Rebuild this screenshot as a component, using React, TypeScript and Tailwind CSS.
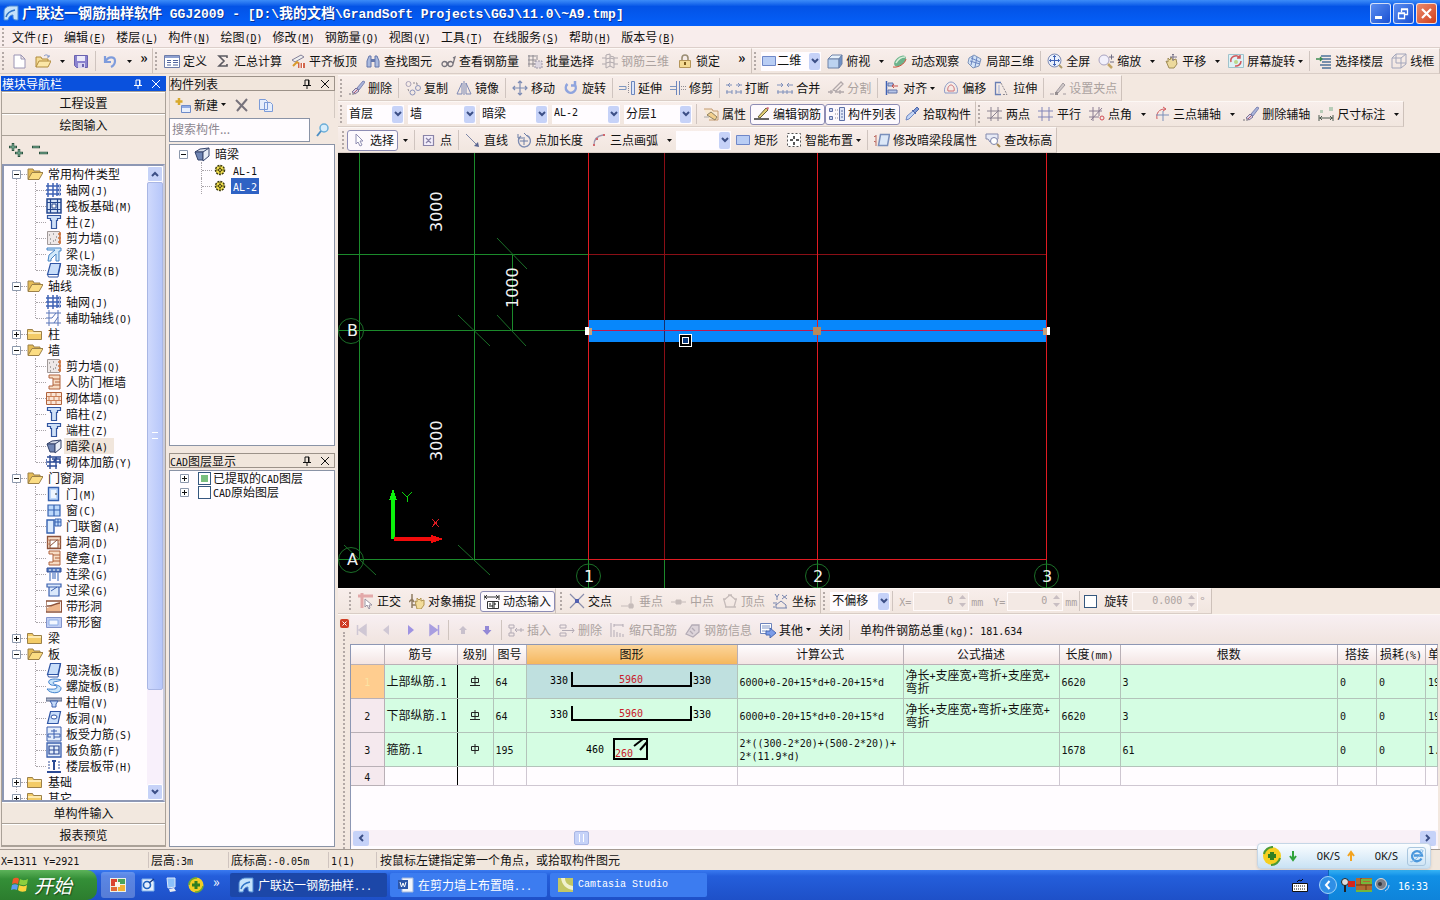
import type { ReactNode } from 'react';
import clsx from 'clsx';

const blue = '#3f62b5';
const sky = '#cfe0f8';
const brick = '#b0623c';
const grey = '#8f8b92';

const icons: Record<string, ReactNode> = {
  file: <path d="M3 2h7l4 4v9H3z M10 2v4h4" fill="#fff" stroke="#9a94b4" />,
  open: <><path d="M1 14V4h5l1 2h6v3" fill="#f5dc95" stroke="#b08a3c" /><path d="M1 14l3-6h12l-3 6z" fill="#fbe7a8" stroke="#b08a3c" /><path d="M9 3c2-2 4-1 5 1m0-2v2h-2" stroke="#7f93c4" fill="none" /></>,
  save: <><path d="M1.500 2.500h13v12h-11l-2-2z" fill="#8b83cf" stroke="#6a62ae" /><path d="M4 3h8v5H4z" fill="#eceafa" /><path d="M5 10h7v5H5z" fill="#d8d4f0" /><path d="M9 11h2v3H9z" fill="#6a62ae" /></>,
  undo: <path d="M3 3v6h6M3.500 8.500C6 3 13 3 13 8c0 3-2 5-4 6" fill="none" stroke="#7f9cdc" strokeWidth="2.200" />,
  define: <><path d="M.5 2.500h15v12H.5z" fill="#fff" stroke="#6d7ca8" /><path d="M1 3h14v2H1z" fill="#8ea0d0" /><path d="M3 7.500h4m2 0h5M3 9.500h4m2 0h5M3 12h4m2 0h5" stroke="#53669e" strokeWidth="1.200" /></>,
  sigma: <path d="M12 5V3H4l5 5-5 5h8v-2" fill="none" stroke="#5b5960" strokeWidth="1.600" />,
  align: <><path d="M2 7l9-5 3 2-9 5z" fill="#eee" stroke="#84809a" /><path d="M3 13l4-4 4 3" fill="none" stroke="#d99a2b" strokeWidth="2" /><path d="M8 10h7v5H8z" fill="#d2664b" /><path d="M10 10v5m2.500-5v5" stroke="#fff" /></>,
  find: <><path d="M2 14V8l2-5h2v11zm8 0V3h2l2 5v6z" fill="#a9b9de" stroke="#6577ab" /><path d="M6 6h4v3H6z" fill="#6577ab" /></>,
  glasses: <path d="M2 11a2.500 2.500 0 1 0 5 0 2.500 2.500 0 1 0-5 0m6 0a2.500 2.500 0 1 0 5 0 2.500 2.500 0 1 0-5 0M7 10h1m5 1l2-7-2 1" fill="none" stroke="#77747c" strokeWidth="1.300" />,
  batch: <><path d="M1 3h8M1 7h8M1 11h7M2 2v12M6 2v12M10 2v5" stroke={grey} /><path d="M8 8h7v7H8z" fill="#ddd6df" stroke="#9b95a5" strokeDasharray="2 1" /></>,
  mesh: <path d="M0 5h4m8 0h4M0 11h4m8 0h4M4 2v13l4-2V1zm4 1l4 1v11l-4-2M4 6l4-1 4 1M4 10l4-1 4 1" fill="none" stroke="#b0a9ad" />,
  lock: <><path d="M5 8V5a3 3 0 0 1 6 0v3" fill="none" stroke="#9b8e74" strokeWidth="1.600" /><path d="M2.500 7.500h11v7h-11z" fill="#f4da93" stroke="#b5965a" /><path d="M8 9v3" stroke="#7b5a1b" strokeWidth="2" /></>,
  box3d: <><path d="M1 6l4-4h10l-3 4z" fill="#e6f0fb" stroke="#6d82a8" /><path d="M1 6h11v9H1z" fill="#bcd3f0" stroke="#6d82a8" /><path d="M12 6l3-4v9l-3 4z" fill="#6f90c6" stroke="#6d82a8" /></>,
  orbit: <><ellipse cx="8" cy="8" rx="4" ry="7" fill="#6db38c" transform="rotate(50 8 8)" /><path d="M4 10C6 6 9 4 13 4" stroke="#d7efd9" strokeWidth="1.500" fill="none" /><path d="M1 14c5 1 12-3 13-8" stroke="#c8533b" fill="none" /></>,
  part3d: <><path d="M2 5l5-3 7 4-2 7-6 2-5-5z" fill="#d3e3f6" stroke="#7e93b8" /><path d="M6 3l-2 9m6-8l-2 10M3 8l10 3M4 5l9 4" stroke="#6b86c2" /></>,
  full: <><circle cx="7.500" cy="7.500" r="6.500" fill="#eaf0fb" stroke="#7f8cb4" /><path d="M7.500 2.500v10m-5-5h10M6 4l1.500-1.500L9 4m-3 7l1.500 1.500L9 11M4 6L2.500 7.500 4 9m7-3l1.500 1.500L11 9" fill="none" stroke={blue} /><path d="M12 12l3 3" stroke="#b09a67" strokeWidth="2" /></>,
  zoom: <><circle cx="6" cy="7" r="5" fill="#f2f0fb" stroke="#a9a3c0" /><path d="M10 11l4 4" stroke="#c3a566" strokeWidth="2.500" /><path d="M11 4h5m-2.500-2.500v5M12 9h4" stroke="#6f6c84" /></>,
  pan: <><path d="M3 8l2 1V5l2 2 1-3 2 3 3-1 1 5-3 4H6z" fill="#ecd99c" stroke="#9f8c56" /><path d="M10 1v7M7 4h7M9 2l1-1 1 1" stroke="#78748a" fill="none" /></>,
  screen: <><path d="M.5 1.500h15v13H.5z" fill="#dff2f6" stroke="#9fc3cc" /><path d="M3 9a5 5 0 0 1 9-4m0-3v3H9M13 8a5 5 0 0 1-6 5" fill="none" stroke="#d0575a" strokeWidth="1.500" /><circle cx="8" cy="9" r="2" fill="#bcd98c" /></>,
  floors: <><path d="M5 3h10M4 6h11M6 9h9M4 12h11M6 15h9" stroke="#4c7299" strokeWidth="1.300" fill="none" /><path d="M0 6h6M4 4l2 2-2 2" stroke="#3c8c52" strokeWidth="1.300" fill="none" /></>,
  wire: <path d="M1 5h9v10H1zM1 5l4-4h10l-5 4m5-4v10l-5 4M5 1v9h10" fill="none" stroke="#a3a6bb" />,
  brush: <><path d="M0 14h6" stroke="#77747c" strokeDasharray="2 1" /><path d="M8 8l6-7 2 1-6 8z" fill="#a9b4da" stroke="#7f84b2" /><path d="M3 12l4-4 3 3-4 3z" fill="#d9d1e8" stroke="#7d7295" /><path d="M5 13l3-3" stroke="#b05c6c" /></>,
  copy: <><circle cx="3.500" cy="4" r="2.500" fill="none" stroke="#a9a2b8" /><circle cx="13" cy="8" r="2.500" fill="none" stroke="#8b92ba" /><circle cx="7.500" cy="12.500" r="2.500" fill="none" stroke="#8b92ba" /><path d="M8 3h4m0 0v2M3 9l1 3" stroke={grey} strokeDasharray="2 1" /></>,
  mirror: <path d="M1 14h5V3zM15 14h-5V3zM8 1v14" fill="none" stroke="#7d89b5" />,
  move: <path d="M8 1v14M1 8h14M6 3l2-2 2 2m-4 10l2 2 2-2M3 6L1 8l2 2m10-4l2 2-2 2" fill="none" stroke="#7d8cb4" strokeWidth="1.200" />,
  rotate: <path d="M4.500 4A5 5 0 1 0 12 5M12 1v4.500H8" fill="none" stroke="#8fa4de" strokeWidth="2.500" />,
  extend: <><path d="M0 6.500h7v3H0" stroke="#7d96c0" fill="none" /><path d="M9.500 2v12" stroke={grey} strokeDasharray="1 1" /><path d="M12.500 1.500h3v13h-3z" fill="#dbe6fa" stroke="#6c86bd" /></>,
  trim: <><path d="M0 6.500h6M0 9.500h6" stroke="#7d96c0" /><path d="M6.500 1v14M9.500 1v14" stroke="#6c86bd" /><path d="M11 6.500h5M11 9.500h5" stroke={grey} strokeDasharray="1 1" /></>,
  breakk: <path d="M0 5h6M10 5h6M4 3L2 5l2 2m8-4l2 2-2 2M0 12h6M10 12h6M1 10v4M6 10v4m4-4v4m5-4v4" fill="none" stroke="#7f90bb" />,
  merge: <path d="M0 5h6M10 5h6M4 3l2 2-2 2m8-4l-2 2 2 2M0 12h16M1 10v4m5-4v4m4-4v4m5-4v4" fill="none" stroke="#7f90bb" />,
  split: <path d="M0 12h5m2 0h9M3 10v4m9-4v4M5 10l8-8 2 2-7 7z" fill="none" stroke="#b1a8aa" strokeWidth="1.300" />,
  alignL: <><path d="M2.500 1v14" stroke={blue} strokeWidth="1.500" /><path d="M4 3h5v3H4zM4 10h9v3H4z" fill="#b7c5e8" stroke="#6274a8" /><path d="M14 6H8m2-2L8 6l2 2" stroke="#c4504c" fill="none" /></>,
  offset: <><path d="M2 13c-2-5 2-11 6-11s8 6 6 11z" fill="none" stroke="#8e9cc8" /><path d="M5 11c-1-3 1-6 3-6s4 3 3 6z" fill="none" stroke="#cf6f76" /></>,
  stretch: <><path d="M7 2.500H1.500v12H7" fill="none" stroke="#6a7fb4" strokeWidth="1.300" /><path d="M7 3l6 11.500H8" stroke={grey} strokeDasharray="2 1" fill="none" /><path d="M5 5v8" stroke="#9fb0d8" /></>,
  grip: <><path d="M0 14h4m9 0h3" stroke="#a29ba0" /><path d="M6 12l7-9 2 2-7 8z" fill="#cfc7c8" stroke="#a29ba0" /><path d="M5 12h3v3H5z" fill="#958e90" /></>,
  prop: <><path d="M1 3h8l1 2h5v9H6" fill="#f9e9d1" stroke="#c39a71" /><path d="M4 9l4-3 6 5-2 3z" fill="#f2cf8c" stroke="#8d8061" /><path d="M1 11h5" stroke="#aaa" /></>,
  pencil: <><path d="M0 13h15" stroke="#333" strokeWidth="1.500" /><path d="M4 11l8-9 2 2-8 8z" fill="#e4cf75" stroke="#67603a" /><path d="M12 2l2 2 1-2-1-1z" fill="#d26a76" /></>,
  list: <><path d="M.5 2.500h3v3h-3zM.5 10.500h3v3h-3z" fill="#cbd5ee" stroke="#5d6fa5" /><path d="M6 4h3M6 8h3M6 12h3" stroke={grey} strokeDasharray="1 1" /><path d="M10.500 1.500h5v13h-5z" fill="#dfe6f7" stroke="#5d6fa5" /><path d="M12 5h2M12 8h2m-2 3h2" stroke="#5d6fa5" /></>,
  pick: <><path d="M2 14l1-4 6-5 2 2-6 6z" fill="#c4d5f5" stroke="#6f88c2" /><path d="M8 4l4 4M9 5l4-4 2 2-4 4z" stroke="#4f68ab" fill="#7f9ad6" /></>,
  ax2: <path d="M4 1v14M11 1v14M0 5h15M0 12h15M3 13l9-9" stroke="#8a8290" fill="none" />,
  axp: <path d="M4 1v14M11 1v14M0 5h15M0 11h15" stroke="#8185b8" fill="none" />,
  axa: <><path d="M4 1v14M0 5h13M0 11h10M2 14L13 2M10 1v9" stroke="#8a7c92" fill="none" /><circle cx="13" cy="12" r="2" fill="none" stroke="#d14c56" /></>,
  ax3: <><path d="M3 13c-1-6 2-10 8-10m-2-2l3 2-3 2" stroke="#d1575c" fill="none" /><path d="M9 5v10M2 9h13" stroke="#7b8fb9" /></>,
  dim: <><path d="M1 9v6M15 9v6M1 12h14M4 10l-2 2 2 2m8-4l2 2-2 2" stroke="#4d5a50" fill="none" /><path d="M2 4h3v3H2zM11 1h4v4h-4z" fill="#b7ccb8" /></>,
  cursor: <path d="M5 2v10l2-2 2 4 2-1-2-4h3z" fill="#fff" stroke="#8f8db2" />,
  point: <path d="M2.500 3.500h10v10h-10zM5 6l5 5m0-5l-5 5" fill="#f3eefb" stroke="#8a84a8" strokeWidth="1.200" />,
  line: <><path d="M1 2l11 11" stroke="#7d86a8" /><path d="M14 15l-1-5-4 4z" fill="#58648f" /></>,
  len: <><path d="M5 4a6 6 0 1 0 6-.5" fill="none" stroke="#7d8cb2" strokeWidth="1.400" /><path d="M8 5v8M4 9h8M2 2v4h5M8 1l3 3" stroke="#6b7ca5" fill="none" /></>,
  arc: <><path d="M3 13C3 7 6 4 12 3" fill="none" stroke="#9d94ab" strokeWidth="1.300" /><path d="M2 12h2v2H2zM5 6h2v2H5zM12 2h2v2h-2z" fill="#d1676d" /></>,
  rect: <path d="M1.500 3.500h13v9h-13z" fill="#b9cdf4" stroke="#6f87c8" />,
  smart: <><path d="M1.500 1.500h13v13h-13z" fill="#fff" stroke="#555" strokeDasharray="2 2" /><path d="M8 4v3m0 3v3M4 8h3m3 0h3" stroke="#222" strokeWidth="1.500" /></>,
  modify: <><path d="M6.500 2.500h9l-2 11h-9z" fill="#dce7f7" stroke="#7a8fbb" strokeWidth="1.500" /><path d="M2 4a3 3 0 0 0 0 6m0 4V3" stroke="#bb6a62" fill="none" /></>,
  level: <><path d="M1 2h12v5l-3 3H5L3 7H1z" fill="#e7eaf6" stroke="#8389ad" /><circle cx="9" cy="9" r="3.500" fill="#fff" stroke="#7c83a9" /><path d="M12 12l3 3" stroke="#a58a55" strokeWidth="2" /></>,
  ortho: <><path d="M0 3h15M4 0v15" stroke="#e3a9a9" strokeWidth="3" /><path d="M7 6v8l2-2 2 4 1-1-1-3h3z" fill="#fff" stroke="#9a93a2" /></>,
  snap: <><path d="M3 1v14M0 9l3-3 2 3M3 12h4" stroke="#8f7c62" fill="none" strokeWidth="1.500" /><path d="M6 8l2 1V5l2 2 2-2v3l3-1v5l-3 4H8z" fill="#f3dc9b" stroke="#b19451" /></>,
  dyn: <><path d="M0 2v5M15 2v5M0 4h15M3 2L1 4l2 2m9-4l2 2-2 2" stroke="#333" fill="none" /><path d="M3.500 8.500h11v7h-11z" fill="#fff" stroke="#333" /><path d="M6 10v4m2-4h3v2H8v2h3" stroke="#111" fill="none" /></>,
  cross: <><path d="M1 1l14 14M15 1L1 15" stroke="#8a8dac" strokeWidth="1.200" /><path d="M6 6h4v4H6z" fill="#5260b0" /></>,
  perp: <path d="M1 13h13M11 3v10M9 11h4v4H9z" stroke="#c6bcba" fill="#c6bcba" />,
  mid: <path d="M0 9h15M5 7h5v4H5z" stroke="#c6bcba" fill="#c6bcba" />,
  vertex: <path d="M8 2l6 5-2 7H4L2 7zM6 2h4M1 6h3M12 6h3M3 14h3m5 0h3" stroke="#c6bcba" fill="none" strokeWidth="1.300" />,
  coord: <path d="M2 1l2 3 2-3M4 4v3M9 2l5 4M14 2L9 6M3 9v6h11M3 12l5-4 5 4v3M0 10h2m-2 4h2" stroke="#7583ad" fill="none" />,
  first: <path d="M3.500 3v10M12 3v10L5 8z" fill="#cfc7d4" stroke="#cfc7d4" strokeWidth="1.500" />,
  prev: <path d="M11 3v10L5 8z" fill="#cfc7d4" />,
  next: <path d="M6 3v10l6-5z" fill="#9f93e2" />,
  last: <path d="M4 3v10l7-5zM12.500 3v10" fill="#a99ee0" stroke="#a99ee0" strokeWidth="1.500" />,
  up: <path d="M8 4l4 4h-2v4H6V8H4z" fill="#c8c0cc" />,
  down: <path d="M8 13l-4.500-5H6V4h4v4h2.500z" fill="#9388d6" />,
  insert: <path d="M1 3h5v3H1zM1 11h5v3H1zM3 6v5M8 8h8m-3-2v4M9 6L7 8l2 2" fill="none" stroke="#b3abb5" />,
  remove: <path d="M1 3h6v3H1zM1 11h6v3H1zM3 8.500h12M13 6l2 2.500L13 11" fill="none" stroke="#b3abb5" />,
  scale: <path d="M1 1v14M4 3h9M4 2v3m9-3v3M4 8v7m3-5v5m3-4v4m3-3v3" fill="none" stroke="#b3abb5" />,
  info: <path d="M1 12l6-9h7v7l-6 5zM7 6l3 3M5 9l3 3" fill="#ddd4da" stroke="#b3abb5" strokeWidth="1.300" />,
  other: <><path d="M.5 1.500h11v10H.5z" fill="#fff" stroke="#6d83bb" /><path d="M2 4h8M2 6h8M2 9h5" stroke="#7f94c6" /><path d="M6 9h4V6l6 5-6 5v-3H6z" fill="#7b9ce8" stroke="#4969b2" /></>,
  newItem: <><path d="M4 1v7M.5 4.500h7" stroke="#d8a92d" strokeWidth="2.500" /><path d="M6.500 8.500h9v7h-9z" fill="#e8effc" stroke="#6d8bc9" /><path d="M7 9h8v2H7z" fill="#8ea9e4" /></>,
  del: <path d="M2 3l11 11M13 2L3 14" stroke="#77737c" strokeWidth="2" />,
  pages: <path d="M1.500 2.500h6l2 2v8h-8zM6.500 5.500h6l2 2v7h-8z" fill="#e6eefc" stroke="#7b9bd8" />,
  folderOpen: <><path d="M1 13V3h5l1 2h6v3" fill="#e6bc57" stroke="#9c8048" /><path d="M1 13.500l4-7h11l-4 7z" fill="#fbdc83" stroke="#9c8048" /></>,
  folder: <><path d="M.5 3.500h5l1 2h8v8H.5z" fill="#f3cb67" stroke="#9c8048" /><path d="M1 7h13" stroke="#fdeab2" strokeWidth="2" /></>,
  grid: <><path d="M2 1v14M7 1v14M0 4h13M0 8h13M0 12h13M11 1v13" stroke={blue} strokeWidth="1.500" /><path d="M12.500 3h2v2h-2zM12.500 7h2v2h-2zM12.500 11h2v2h-2z" fill="#fff" stroke={blue} /></>,
  raft: <><path d="M1 1h14v14H1z" fill="#d6e4f8" stroke="#24468e" strokeWidth="1.500" /><path d="M4.500 1v14M11.500 1v14M1 4.500h14M1 11.500h14" stroke="#24468e" strokeWidth="1.200" /><path d="M6 6h4v4H6z" fill="#fff" stroke="#24468e" /></>,
  column: <path d="M1.500 1.500h13v3h-3v2h-1v8h-5v-8h-1v-2h-3z" fill={sky} stroke="#31549f" strokeWidth="1.200" />,
  shear: <><path d="M1.500 1.500h12v13h-12z" fill="#eee8e8" stroke="#a09898" /><path d="M14 2v12M12 4h3m-3 4h3m-3 4h3" stroke="#cc7440" strokeWidth="1.500" /><path d="M3 5h1m3-1h1m2 3h1M4 9h1m2 2h1m-4 2h1m4-3h1" stroke="#666" /></>,
  beam: <path d="M1 2h14v3h-2v10h-3V8l-5 5v2H2l1-6 6-5H1z" fill="#d2e9fa" stroke="#4785c5" />,
  slab: <><path d="M4.500 1.500h10l-2.500 11H1.500z" fill="#c9defa" stroke="#2f55a5" strokeWidth="1.200" /><path d="M1.500 12.500l1 2.500h9.500l2.500-13" fill="none" stroke="#2f55a5" /></>,
  aux: <path d="M3 0v16M12 0v16M0 3h15M0 13h15M0 8h6l4-5M8 13l4-6" fill="none" stroke="#5874b8" />,
  door1: <><path d="M3 1h11v14H3v-3h4V4H3z" fill="#f7dcc5" stroke={brick} /><path d="M7 5h7M9 8h5M7 11h7" stroke={brick} /></>,
  masonry: <><path d="M.5 2.500h15v12H.5z" fill="#fae5d7" stroke={brick} /><path d="M1 6.500h14M1 10.500h14M5 3v3.500m5-3.500v3.500M3 7v3m5-3v3m5-3v3M5 11v3m5-3v3" stroke="#cb8058" /></>,
  hidden: <><path d="M1 6l5-3 9-1-4 4z" fill="#d4dbe8" stroke="#36456c" /><path d="M1 6h8v8H4z" fill="#7086b4" stroke="#36456c" /><path d="M9 6l6-4v8l-6 5z" fill="#e9eef7" stroke="#36456c" /></>,
  rebar: <path d="M1 3h14M1 8h14M1 12h10M4 1v14M10 3v12M0 5v6M6 5h8v5M7 8l4-4" fill="none" stroke="#2d4b96" strokeWidth="1.400" />,
  door: <><path d="M2.500 1.500h10v13h-10z" fill="#bfd8fa" stroke="#3561b0" strokeWidth="1.400" /><path d="M5 4h5v8H5z" fill="#eff6ff" /><path d="M9 8h2" stroke="#333" /></>,
  win: <><path d="M2 3h12v11H2z" fill="#bcd8fb" stroke="#3561b0" strokeWidth="1.200" /><path d="M8 3v11M2 8h12" stroke="#3561b0" strokeWidth="1.200" /></>,
  doorWin: <><path d="M1 2h7v13H1z" fill="#dcebfd" stroke="#3561b0" strokeWidth="1.400" /><path d="M9 1h6v7H9zM12 1v7M9 4h6" fill="#bcd8fb" stroke="#3561b0" /></>,
  hole: <><path d="M1.500 2.500h13v12h-13z" fill="#f7dcc5" stroke="#8d523a" strokeWidth="1.300" /><path d="M1.500 6h3M11 6h3.500M1.500 10h3M11 10h3.500" stroke="#cb8058" /><path d="M4 6h8v8H4zM4 12l7-6" fill="#fff" stroke="#8d523a" /></>,
  link: <><path d="M1 2h14v4H1z" fill="#5b80c2" stroke="#2d4b96" /><path d="M3 4h2m2 0h2m2 0h2" stroke="#fff" /><path d="M4 6v9M12 6v9M7 6v7M9 6v7" stroke="#7796d0" strokeWidth="1.500" /></>,
  lintel: <><path d="M1 2h14v3H1zM3 5v9h10V5" fill="#dbe8fb" stroke="#3a5fae" strokeWidth="1.200" /><path d="M5 9l6-4" stroke="#3a5fae" /></>,
  stripHole: <><path d="M0 3h15.500v11H0z" fill="#fff" stroke="#8d523a" strokeWidth="1.300" /><path d="M1 10l13-6v9H1z" fill="#eeb68c" /><path d="M1 8c5 1 8-3 13-3" stroke="#8d523a" strokeWidth="1.500" fill="none" /></>,
  stripWin: <><path d="M.5 3.500h15v10H.5z" fill="#bfcdf3" stroke="#8293ca" /><path d="M3 6h9v5H3z" fill="#f3f7ff" stroke="#8fb0e8" /></>,
  spiral: <path d="M15 2C9 0 1 1 3 5s8 1 8 4-6 2-10 2c3 5 13 5 14 0 1-4-8-4-8-6s5-1 8-3z" fill="#c9e4fb" stroke="#3f80cc" />,
  cap: <><path d="M0 4h16v3H0z" fill="#aab3c8" stroke="#5b6786" /><path d="M4 7h8l-2 3v3H6v-3z" fill="#c6dbfa" stroke="#3a5fae" /></>,
  slabHole: <><path d="M4.500 1.500h10l-2.500 12H1.500z" fill="#c9defa" stroke="#2f55a5" strokeWidth="1.200" /><ellipse cx="8" cy="7" rx="3" ry="2" fill="#fff" stroke="#2f55a5" /></>,
  bar1: <><path d="M1 1h14v14H1z" fill="#e4edfb" stroke="#3a5fae" /><path d="M2 8h12v3H8M2 8v3h3M8 3v10M5 5h6" fill="none" stroke="#3a5fae" /></>,
  bar2: <><path d="M1 1h14v14H1z" fill="#e4edfb" stroke="#3a5fae" strokeWidth="1.300" /><path d="M3 8V4h10v4H3v4h10V8M8 4v8" fill="none" stroke="#2d4b96" strokeWidth="1.200" /></>,
  strip: <><path d="M1 14h14M8 3v9M6 3h4" stroke="#2d4b96" strokeWidth="2" /><path d="M3 3v9M13 3v9" stroke="#2d4b96" strokeDasharray="2 1" /></>,
  gear: <><circle cx="8" cy="8" r="4.500" fill="#f4e04d" stroke="#3d3b12" strokeDasharray="2 1" strokeWidth="1.500" /><path d="M8 4v8M4 8h8" stroke="#5d5a1a" /><circle cx="8" cy="8" r="1.500" fill="#f4e04d" stroke="#3d3b12" /></>,
  logo: <><path d="M1 15V7c0-4 3-6 7-6h7v14h-2c-2 0-3-1-3-3v-2c-2 0-4 1-5 5z" fill="#c4e2fb" stroke="#4d8ad2" /><path d="M3 12c1-4 4-6 9-7" stroke="#2f74c6" fill="none" strokeWidth="1.500" /></>,
  search: <><circle cx="9" cy="6" r="4" fill="#d8edfb" stroke="#6baed8" strokeWidth="1.500" /><path d="M6 9l-4 5" stroke="#4e8fc4" strokeWidth="2" /></>,
};

function Icon({ name, size = 'size-4' }: { name: string; size?: string }) {
  return (
    <svg viewBox="0 0 16 16" className={clsx('shrink-0', size)} fill="none" aria-hidden="true">
      {icons[name]}
    </svg>
  );
}

// Han characters take the CJK face, ASCII runs a half-width mono face
function T({ children, ul }: { children: string; ul?: boolean }) {
  return (
    <span className="whitespace-pre">
      {children.split(/([\x20-\x7e]+)/).map((part, i) =>
        i % 2 ? (
          <span key={i} className="font-['DejaVu_Sans_Mono',monospace] text-[10px] leading-none">
            {ul ? <>{part[0]}<u>{part.slice(1, -1)}</u>{part.slice(-1)}</> : part}
          </span>
        ) : (
          part
        )
      )}
    </span>
  );
}

function Caret() {
  return <svg viewBox="0 0 5 3" className="h-[3px] w-[5px] shrink-0" aria-hidden="true"><path d="M0 0h5L2.500 3z" fill="#111" /></svg>;
}

type ToolProps = { icon?: string; label?: string; off?: boolean; pressed?: boolean; menu?: boolean; split?: boolean; title?: string };

function Tool({ icon, label, off, pressed, menu, split, title }: ToolProps) {
  return (
    <>
      <button
        type="button"
        disabled={off}
        aria-label={label ? undefined : title}
        className={clsx(
          'flex h-[21px] shrink-0 items-center gap-[3px] rounded-[3px]',
          off && 'text-[#aba29f]',
          pressed ? 'border border-[#8d8cb4] bg-[#fdf9fd] px-[3px]' : 'px-1'
        )}
      >
        {icon && <Icon name={icon} />}
        {label && <T>{label}</T>}
        {menu && <Caret />}
      </button>
      {split && (
        <button type="button" aria-label={`${label ?? title} 选项`} className="flex h-[21px] w-[14px] shrink-0 items-center justify-center">
          <Caret />
        </button>
      )}
    </>
  );
}

function Sep() {
  return <span className="mx-[2px] h-5 w-px shrink-0 bg-[#cfc4bf]" />;
}

function Grip() {
  return <span className="ml-[2px] mr-[2px] h-[18px] w-[3px] shrink-0 border-l-2 border-dotted border-[#b3a9a6]" />;
}

function Bar({ children, className }: { children: ReactNode; className?: string }) {
  return (
    <div className={clsx('flex h-[26px] shrink-0 items-center border-b border-r border-t border-b-[#d9cdc6] border-r-[#cdc1ba] border-t-[#fdf8f5] bg-linear-to-b from-[#f8eeeb] to-[#f1e6df]', className)}>
      {children}
    </div>
  );
}

function Chevron({ className }: { className?: string }) {
  return <svg viewBox="0 0 8 6" className={clsx('h-[6px] w-2', className)} fill="none" aria-hidden="true"><path d="M1 1l3 3 3-3" stroke="#3c4f86" strokeWidth="2" /></svg>;
}

function Combo({ value, label, className, icon, mono }: { value: string; label: string; className: string; icon?: string; mono?: boolean }) {
  return (
    <div className={clsx('relative flex h-[19px] shrink-0 items-center bg-[#fffcff]', className)}>
      {icon && <Icon name={icon} />}
      <select
        aria-label={label}
        defaultValue={value}
        className={clsx('h-full w-full min-w-0 appearance-none bg-transparent pb-[3px] leading-4 outline-none', icon ? 'pl-0' : 'pl-[2px]', mono && "font-['DejaVu_Sans_Mono',monospace] text-[10px]")}
      >
        <option>{value}</option>
      </select>
      <span className="pointer-events-none absolute inset-y-px right-px flex w-[11px] items-center justify-center rounded-[2px] bg-[#c6d2f8]">
        <Chevron />
      </span>
    </div>
  );
}

const menus = ['文件(F)', '编辑(E)', '楼层(L)', '构件(N)', '绘图(D)', '修改(M)', '钢筋量(Q)', '视图(V)', '工具(T)', '在线服务(S)', '帮助(H)', '版本号(B)'];

function TitleBar() {
  return (
    <header className="flex h-[26px] shrink-0 items-center bg-linear-to-b from-[#3c8cf8] via-[#0353e6] via-25% to-[#0560fa] px-[3px] text-white">
      <Icon name="logo" />
      <h1 className="ml-[3px] whitespace-pre text-[14px] font-bold leading-5 [text-shadow:1px_1px_0_#0b3394]">
        广联达一钢筋抽样软件
        <span className="font-['Liberation_Mono',monospace] text-[13px]">{' GGJ2009 - [D:\\'}</span>
        我的文档
        <span className="font-['Liberation_Mono',monospace] text-[13px]">{'\\GrandSoft Projects\\GGJ\\11.0\\~A9.tmp]'}</span>
      </h1>
      <div className="ml-auto flex gap-[2px]">
        <button type="button" aria-label="最小化" className="size-[21px] rounded-[3px] border border-white/80 bg-linear-to-br from-[#5b8df0] to-[#1a4fd2]">
          <svg viewBox="0 0 19 19"><path d="M4 12h7v3H4z" fill="#fff" /></svg>
        </button>
        <button type="button" aria-label="还原" className="size-[21px] rounded-[3px] border border-white/80 bg-linear-to-br from-[#5b8df0] to-[#1a4fd2]">
          <svg viewBox="0 0 19 19" fill="none" stroke="#fff"><path d="M4.500 9.500h6v5h-6zM4 9h7M7.500 8V5.500h6v5H11M7 5h7" strokeWidth="1.300" /></svg>
        </button>
        <button type="button" aria-label="关闭" className="size-[21px] rounded-[3px] border border-white/80 bg-linear-to-br from-[#ea8a6c] to-[#cf3c16]">
          <svg viewBox="0 0 19 19"><path d="M5 5l9 9M14 5l-9 9" stroke="#fff" strokeWidth="2.200" /></svg>
        </button>
      </div>
    </header>
  );
}

type Group = { name: string; open?: boolean; items?: [string, string][] };

const groups: Group[] = [
  { name: '常用构件类型', open: true, items: [['grid', '轴网(J)'], ['raft', '筏板基础(M)'], ['column', '柱(Z)'], ['shear', '剪力墙(Q)'], ['beam', '梁(L)'], ['slab', '现浇板(B)']] },
  { name: '轴线', open: true, items: [['grid', '轴网(J)'], ['aux', '辅助轴线(O)']] },
  { name: '柱' },
  { name: '墙', open: true, items: [['shear', '剪力墙(Q)'], ['door1', '人防门框墙'], ['masonry', '砌体墙(Q)'], ['column', '暗柱(Z)'], ['column', '端柱(Z)'], ['hidden', '暗梁(A)'], ['rebar', '砌体加筋(Y)']] },
  { name: '门窗洞', open: true, items: [['door', '门(M)'], ['win', '窗(C)'], ['doorWin', '门联窗(A)'], ['hole', '墙洞(D)'], ['door1', '壁龛(I)'], ['link', '连梁(G)'], ['lintel', '过梁(G)'], ['stripHole', '带形洞'], ['stripWin', '带形窗']] },
  { name: '梁' },
  { name: '板', open: true, items: [['slab', '现浇板(B)'], ['spiral', '螺旋板(B)'], ['cap', '柱帽(V)'], ['slabHole', '板洞(N)'], ['bar1', '板受力筋(S)'], ['bar2', '板负筋(F)'], ['strip', '楼层板带(H)']] },
  { name: '基础' },
  { name: '其它' },
];

function Expander({ open }: { open?: boolean }) {
  return (
    <svg viewBox="0 0 9 9" className="relative size-[9px] shrink-0" aria-hidden="true">
      <path d="M.5.5h8v8h-8z" fill="#fff" stroke="#8c98ac" />
      <path d={open ? 'M2 4.500h5' : 'M2 4.500h5M4.500 2v5'} stroke="#111" />
    </svg>
  );
}

function PanelHead({ title, active }: { title: string; active?: boolean }) {
  return (
    <div className={clsx('flex h-[15px] shrink-0 items-center border', active ? 'border-[#0a51dd] bg-[#0a51dd] text-white' : 'border-[#9c9289] bg-[#f1e6dc]')}>
      <h2 className="flex-1"><T>{title}</T></h2>
      <button type="button" aria-label="固定" className="mr-2">
        <svg viewBox="0 0 10 10" className="size-[10px]" fill="none" stroke="currentColor"><path d="M3 1h4v5M3 1v5M1 6.500h8M5 7v3M6.500 1v5" /></svg>
      </button>
      <button type="button" aria-label="关闭面板" className="mr-1">
        <svg viewBox="0 0 10 10" className="size-[10px]" fill="none" stroke="currentColor"><path d="M1 1l8 8M9 1L1 9" /></svg>
      </button>
    </div>
  );
}

const sideBtn = 'h-[22px] w-full shrink-0 border-b border-t border-b-[#aaa198] border-t-white bg-[#f2e8df] text-center';

function NavPanel() {
  return (
    <aside className="flex w-[166px] shrink-0 flex-col pl-[1px]">
      <PanelHead title="模块导航栏" active />
      <div className="flex min-h-0 flex-1 flex-col border border-[#aaa198]">
        <button type="button" className={sideBtn}>工程设置</button>
        <button type="button" className={sideBtn}>绘图输入</button>
        <div className="flex h-7 shrink-0 items-center gap-2 px-[6px]">
          <button type="button" aria-label="全部展开">
            <svg viewBox="0 0 16 16" className="size-4"><path d="M5 1v8M1 5h8M11 7v8M7 11h8" stroke="#2c5340" strokeWidth="2.500" /><path d="M5 2v6M2 5h6M11 8v6M8 11h6" stroke="#7db59a" /></svg>
          </button>
          <button type="button" aria-label="全部折叠">
            <svg viewBox="0 0 16 16" className="size-4"><path d="M0 5h8M7 11h9" stroke="#2c5340" strokeWidth="2.500" /><path d="M1 5h6M8 11h7" stroke="#7db59a" /></svg>
          </button>
        </div>
        <div className="flex min-h-0 flex-1 border-2 border-[#8d97b4] border-r-[#c9cbdc] bg-[#fffcff]">
          <ul className="relative min-w-0 flex-1 overflow-hidden">
            <li aria-hidden="true" className="absolute inset-y-2 left-[12px] border-l border-dotted border-[#a9a4a9]" />
            {groups.map((g, gi) => (
              <li key={gi} className="relative">
                <div className="flex h-4 items-center pl-2">
                  <Expander open={g.open} />
                  <span className="w-[6px] border-t border-dotted border-[#a9a4a9]" />
                  <Icon name={g.open ? 'folderOpen' : 'folder'} />
                  <span className="ml-[5px]"><T>{g.name}</T></span>
                </div>
                {g.items && (
                  <ul className="relative">
                    <li aria-hidden="true" className="absolute bottom-2 left-[31px] top-0 border-l border-dotted border-[#a9a4a9]" />
                    {g.items.map(([icon, label]) => (
                      <li key={label} className="flex h-4 items-center pl-8">
                        <span className="w-[10px] shrink-0 border-t border-dotted border-[#a9a4a9]" />
                        <Icon name={icon} />
                        <span className={clsx('ml-[2px] px-[2px]', label === '暗梁(A)' && 'bg-[#f1e6dc] pr-[6px]')}><T>{label}</T></span>
                      </li>
                    ))}
                  </ul>
                )}
              </li>
            ))}
          </ul>
          <div className="flex w-4 shrink-0 flex-col bg-[#f8f0fb]">
            <button type="button" aria-label="向上滚动" className="flex h-4 items-center justify-center rounded-[2px] border border-white bg-[#c6d2f8]"><Chevron className="rotate-180" /></button>
            <div className="flex flex-[236] items-center justify-center rounded-[2px] border border-[#a9b6e4] bg-linear-to-r from-[#cfd9fc] to-[#b7c7fa]">
              <span className="h-[7px] w-[6px] border-y border-white" />
            </div>
            <div className="flex-[44]" />
            <button type="button" aria-label="向下滚动" className="flex h-4 items-center justify-center rounded-[2px] border border-white bg-[#c6d2f8]"><Chevron /></button>
          </div>
        </div>
        <button type="button" className={sideBtn}>单构件输入</button>
        <button type="button" className={sideBtn}>报表预览</button>
      </div>
    </aside>
  );
}

function ListPanel() {
  return (
    <aside className="ml-[3px] flex w-[166px] shrink-0 flex-col">
      <PanelHead title="构件列表" />
      <div className="flex h-[27px] shrink-0 items-center border-x border-[#d3c9c2] pl-px">
        <Tool icon="newItem" label="新建" menu />
        <Tool icon="del" title="删除" />
        <Tool icon="pages" title="复制" />
      </div>
      <div className="flex h-[26px] shrink-0 items-start">
        <input aria-label="搜索构件" placeholder="搜索构件..." className="h-6 min-w-0 flex-1 border border-[#8a93a6] bg-[#fffcff] px-[2px] pb-1 outline-none placeholder:text-[#8d8790]" />
        <button type="button" aria-label="搜索" className="flex h-6 w-[25px] items-center justify-center"><Icon name="search" /></button>
      </div>
      <ul className="h-[302px] shrink-0 border border-[#8a93a6] bg-[#fffcff] pl-[9px] pt-px">
        <li>
          <div className="flex h-4 items-center">
            <Expander open />
            <span className="ml-[6px]"><Icon name="hidden" /></span>
            <span className="ml-[5px]">暗梁</span>
          </div>
          <ul className="ml-[22px]">
            {['AL-1', 'AL-2'].map((n) => (
              <li key={n} className="flex h-4 items-center">
                <span className="h-4 w-[11px] border-l border-dotted border-[#a9a4a9] pt-2"><span className="block border-t border-dotted border-[#a9a4a9]" /></span>
                <Icon name="gear" />
                <span className={clsx('ml-[3px] px-[2px] leading-4', n === 'AL-2' && 'bg-[#2f62c4] text-white')}><T>{n}</T></span>
              </li>
            ))}
          </ul>
        </li>
      </ul>
      <div className="mt-[7px] flex min-h-0 flex-1 flex-col">
        <PanelHead title="CAD图层显示" />
        <ul className="mt-[2px] flex-1 border border-[#8a93a6] bg-[#fffcff] pl-[10px]">
          {['已提取的CAD图层', 'CAD原始图层'].map((n, i) => (
            <li key={n} className="flex h-[14px] items-center">
              <Expander />
              <label className="ml-[9px] flex items-center gap-[2px]">
                <input type="checkbox" defaultChecked={i === 0} className="size-[13px] appearance-none border border-[#35587f] bg-white checked:bg-[#79c07d] checked:shadow-[inset_0_0_0_2px_#fff]" />
                <T>{n}</T>
              </label>
            </li>
          ))}
        </ul>
      </div>
    </aside>
  );
}

function Drawing() {
  return (
    <div className="min-h-0 flex-1 overflow-hidden bg-black">
      {/* model space, window coordinates */}
      <svg width="1100" height="436" viewBox="338 153 1100 436" fill="none" shapeRendering="crispEdges" role="img" aria-label="绘图区">
        <g stroke="#1b8a2b">
          <path d="M359.500 153v406M474.500 153v406M338 254.500h250M338 330.500h250M338 559.500h250M512.500 254v77M664.500 560v29" />
          <path d="M588.500 560v29M817.500 560v29M1046.500 560v29" />
        </g>
        <g stroke="#1b6f28" shapeRendering="auto">
          <path d="M497 238l30 31M497 315l29 31M458 315l32 31M458 545l32 30M344 545l32 30" />
          <circle cx="351" cy="331" r="12.500" /><circle cx="351" cy="560" r="12.500" />
          <circle cx="588.500" cy="576" r="12" /><circle cx="817.500" cy="576" r="12" /><circle cx="1046.500" cy="576" r="12" />
        </g>
        <path d="M589 254h457v1H589zM664 153h1v407h-1z" fill="#8a0f16" />
        <path d="M589 320h457v22H589z" fill="#0787fb" />
        <path d="M664 320h1v22h-1z" fill="#14306e" />
        <path d="M589 330h457v1H589z" fill="#c01850" />
        <path d="M588 153h1v407h-1zM817 153h1v407h-1zM1046 153h1v407h-1zM588 559h459v1H588z" fill="#e01b22" />
        <path d="M585 327h4v8h-4zM1047 327h3v8h-3z" fill="#fff" />
        <path d="M589 328h3v7h-3zM1043 328h4v7h-4z" fill="#c9a27a" />
        <path d="M813 327h8v8h-8z" fill="#b58a5c" />
        <path d="M679.500 334.500h12v12h-12z" fill="#000" stroke="#fff" /><path d="M682.500 337.500h6v6h-6z" fill="#0b3a80" stroke="#fff" />
        <path d="M391 539v-39h-2l4-11 4 11h-2v39z" fill="#0cf20c" />
        <path d="M394 537h37v-2l12 4-12 4v-2h-37z" fill="#f20c0c" />
        <path d="M402 492l5 5 5-5M407 497v5" stroke="#0cd20c" />
        <path d="M432 519l7 8M439 519l-7 8" stroke="#e01b22" />
        <g className="fill-[#f2f2f2] font-['DejaVu_Sans',sans-serif] text-[16px]">
          <text transform="translate(442 232) rotate(-90)">3000</text>
          <text transform="translate(442 461) rotate(-90)">3000</text>
          <text transform="translate(518 308) rotate(-90)">1000</text>
          <text x="347" y="336">B</text>
          <text x="347" y="565">A</text>
          <text x="584" y="582">1</text>
          <text x="813" y="582">2</text>
          <text x="1042" y="582">3</text>
        </g>
      </svg>
    </div>
  );
}

function Spin({ label, value, unit, wide }: { label: string; value: string; unit: string; wide?: boolean }) {
  return (
    <label className="flex shrink-0 items-center gap-[2px] pl-1 text-[#aba29f]">
      {label && <T>{label}</T>}
      <span className={clsx('flex h-[19px] items-center border border-[#fffafa] bg-[#f3e9e4]', wide ? 'w-[66px]' : 'w-[56px]')}>
        <input disabled defaultValue={value} aria-label={label || '角度'} className="w-0 min-w-0 flex-1 bg-transparent pr-1 text-right font-['DejaVu_Sans_Mono',monospace] text-[10px]" />
        <svg viewBox="0 0 11 14" className="h-[14px] w-[11px] shrink-0" aria-hidden="true"><path d="M2 5l3.500-4L9 5zM2 9l3.500 4L9 9z" fill="#c8bec2" /></svg>
      </span>
      <T>{unit}</T>
    </label>
  );
}

function Grade({ bar }: { bar?: boolean }) {
  return (
    <svg viewBox="0 0 10 10" className="mx-auto size-[10px]" fill="none" stroke="#222" aria-hidden="true">
      <path d={bar ? 'M1.500 2.500h7v4h-7zM5 0v9M0 9.500h10' : 'M1.500 2.500h7v4h-7zM5 0v10'} />
    </svg>
  );
}

const shapeText = "font-['DejaVu_Sans_Mono',monospace] text-[10px]";

function Straight() {
  return (
    <svg width="210" height="32" viewBox="0 0 210 32" className={shapeText}>
      <path d="M45 7v14h119V7" fill="none" stroke="#000" strokeWidth="2" />
      <text x="23" y="19">330</text><text x="92" y="18" fill="#c8202a">5960</text><text x="166" y="19">330</text>
    </svg>
  );
}

function Stirrup() {
  return (
    <svg width="210" height="32" viewBox="0 0 210 32" className={shapeText}>
      <path d="M87 6h33v20H87zM107 13l9-7M113 17l7-8" fill="none" stroke="#000" strokeWidth="2" />
      <text x="59" y="20">460</text><text x="88" y="24" fill="#c8202a">260</text>
    </svg>
  );
}

const heads = ['', '筋号', '级别', '图号', '图形', '计算公式', '公式描述', '长度(mm)', '根数', '搭接', '损耗(%)', '单重'];
const desc = ['净长+支座宽+弯折+支座宽+', '弯折'];
const rows = [
  { name: '上部纵筋.1', bar: true, no: '64', shape: <Straight />, calc: ['6000+0-20+15*d+0-20+15*d'], desc, len: '6620', count: '3', kg: '19.' },
  { name: '下部纵筋.1', bar: true, no: '64', shape: <Straight />, calc: ['6000+0-20+15*d+0-20+15*d'], desc, len: '6620', count: '3', kg: '19.' },
  { name: '箍筋.1', bar: false, no: '195', shape: <Stirrup />, calc: ['2*((300-2*20)+(500-2*20))+', '2*(11.9*d)'], desc: [], len: '1678', count: '61', kg: '1.' },
];

function Lines({ text }: { text: string[] }) {
  return <>{text.map((t) => <span key={t} className="block leading-3"><T>{t}</T></span>)}</>;
}

function RebarTable() {
  const td = 'overflow-hidden border-b border-r border-[#b3c3ba] px-[2px]';
  return (
    <table className="w-full table-fixed border-collapse">
      <colgroup>
        <col className="w-[33px]" /><col className="w-[73px]" /><col className="w-[36px]" /><col className="w-[33px]" />
        <col className="w-[211px]" /><col className="w-[166px]" /><col className="w-[156px]" /><col className="w-[61px]" />
        <col /><col className="w-[39px]" /><col className="w-[49px]" /><col className="w-[12px]" />
      </colgroup>
      <thead>
        <tr className="h-[19px] bg-linear-to-b from-[#fffdff] to-[#f3e5e3]">
          {heads.map((h, i) => (
            <th key={i} className={clsx('overflow-hidden border-b border-r border-[#b9b0b6] font-normal', h === '图形' && 'bg-linear-to-b from-[#fbd49a] to-[#f5b75c]', i === 11 && 'pl-[2px] text-left')}>
              <T>{h}</T>
            </th>
          ))}
        </tr>
      </thead>
      <tbody>
        {rows.map((r, i) => (
          <tr key={i} className="h-[34px] bg-[#d5fde3]">
            <th className={clsx('border-b border-r border-[#b9b0b6] font-normal', i === 0 ? 'bg-[#ffcd8f] text-[#fbe3a4]' : 'bg-[#f5e9ee]')}><T>{String(i + 1)}</T></th>
            <td className={clsx(td, 'border-r-black')}><T>{r.name}</T></td>
            <td className={td}><Grade bar={r.bar} /></td>
            <td className={td}><T>{r.no}</T></td>
            <td className={clsx('overflow-hidden border-b border-r border-[#b3c3ba] p-0', i === 0 && 'bg-[#bfe0df]')}>{r.shape}</td>
            <td className={td}><Lines text={r.calc} /></td>
            <td className={td}><Lines text={r.desc} /></td>
            <td className={td}><T>{r.len}</T></td>
            <td className={td}><T>{r.count}</T></td>
            <td className={td}><T>0</T></td>
            <td className={td}><T>0</T></td>
            <td className={td}><T>{r.kg}</T></td>
          </tr>
        ))}
        <tr className="h-[19px] bg-[#fffcff]">
          <th className="border-b border-r border-[#b9b0b6] bg-[#f5e9ee] font-normal"><T>4</T></th>
          {heads.slice(1).map((h, i) => <td key={h} className={clsx('border-b border-r border-[#cfc7d2]', i === 0 && 'border-r-black')} />)}
        </tr>
      </tbody>
    </table>
  );
}

function RebarPanel() {
  return (
    <section className="flex h-[235px] shrink-0 border-t border-[#fdf8f5]">
      <div className="flex w-[12px] shrink-0 flex-col items-center pt-[4px]">
        <button type="button" aria-label="关闭钢筋编辑" className="size-[9px] shrink-0 rounded-[2px] bg-[#cf3b22]">
          <svg viewBox="0 0 9 9"><path d="M2.500 2.500l4 4M6.500 2.500l-4 4" stroke="#fff" /></svg>
        </button>
        <span className="mt-1 flex-1 border-l-2 border-dotted border-[#b3a9a6]" />
      </div>
      <div className="flex min-w-0 flex-1 flex-col">
        <div className="flex h-[29px] shrink-0 items-center bg-linear-to-b from-[#f8eff2] to-[#f0e4df]">
          {['first', 'prev', 'next', 'last'].map((n) => <Tool key={n} icon={n} title={n} />)}
          <Sep />
          <Tool icon="up" title="上移" />
          <Tool icon="down" title="下移" />
          <Sep />
          <Tool icon="insert" label="插入" off />
          <Tool icon="remove" label="删除" off />
          <Tool icon="scale" label="缩尺配筋" off />
          <Tool icon="info" label="钢筋信息" off />
          <Tool icon="other" label="其他" menu />
          <Tool label="关闭" />
          <Sep />
          <span className="pl-2"><T>单构件钢筋总重(kg)：181.634</T></span>
        </div>
        <div className="mr-[2px] flex min-h-0 flex-1 flex-col border-l border-t border-[#8d97b4] bg-[#fffcff]">
          <RebarTable />
          <div className="mb-[3px] mt-auto flex h-4 items-center justify-between bg-[#f9f1f7] px-[2px]">
            <button type="button" aria-label="向左滚动" className="flex h-[15px] w-4 items-center justify-center rounded-[2px] bg-[#c6d2f8]"><Chevron className="rotate-90" /></button>
            <div className="flex flex-1 px-[205px]"><span className="flex h-[14px] w-[15px] items-center justify-center rounded-[2px] border border-[#a9b6e4] bg-[#c6d2f8]"><span className="h-2 w-[5px] border-x border-white" /></span></div>
            <button type="button" aria-label="向右滚动" className="flex h-[15px] w-4 items-center justify-center rounded-[2px] bg-[#c6d2f8]"><Chevron className="-rotate-90" /></button>
          </div>
        </div>
      </div>
    </section>
  );
}

function Taskbar() {
  const task = 'flex h-6 w-[157px] items-center gap-1 rounded-[2px] px-2 text-left';
  return (
    <footer className="flex h-[30px] shrink-0 items-center bg-linear-to-b from-[#3a7af0] via-[#245edb] via-20% to-[#1e50c8] text-white">
      <button type="button" className="flex h-full w-[97px] items-center gap-1 rounded-r-[10px] bg-linear-to-b from-[#5cb35a] via-[#348f37] via-30% to-[#2c7d2e] pl-[10px]">
        <svg viewBox="0 0 20 20" className="size-5" aria-hidden="true">
          <path d="M3 4c3-2 5-1 6 0L8 9C6 8 4 8 2 9z" fill="#f0592a" /><path d="M10 4c2 1 4 2 8 0l-1 5c-3 2-6 1-8 0z" fill="#8ccf3e" />
          <path d="M2 10c2-1 4-1 6 0l-1 5c-2-1-4-1-6 0z" fill="#5b9bf3" /><path d="M9 10c2 1 5 2 8 0l-1 6c-3 1-6 1-8-1z" fill="#fcd33c" />
        </svg>
        <span className="text-[19px] italic leading-6 [text-shadow:1px_1px_1px_#1c4a1c]">开始</span>
      </button>
      <div className="flex items-center pl-1">
        <button type="button" aria-label="快捷方式" className="flex h-[26px] w-[34px] items-center justify-center rounded-[3px] bg-white/25">
          <svg viewBox="0 0 16 16" className="size-4"><path d="M0 1h16v14H0z" fill="#e9efe9" /><path d="M1 2h6v7H1z" fill="#d9442f" /><path d="M8 2h7v5H8z" fill="#4aa35a" /><path d="M8 8h7v6H8z" fill="#f2b234" /><path d="M1 10h6v4H1z" fill="#e26a36" /><path d="M5 5h5v5H5z" fill="#fbf6e8" /></svg>
        </button>
        <div className="flex items-center gap-2 px-[5px]">
          <svg viewBox="0 0 16 16" className="size-4"><path d="M2 2h10l2 3v9H2z" fill="#e6effc" stroke="#7fb0ea" /><circle cx="7" cy="8" r="3.500" fill="none" stroke="#1d62c0" strokeWidth="1.600" /><path d="M9 6l5-4" stroke="#1b3c80" strokeWidth="1.500" /></svg>
          <svg viewBox="0 0 16 16" className="size-4"><path d="M3 1h8v9l-7 1z" fill="#8bc0fa" stroke="#dbe9fb" /><path d="M5 12l5-1 2 3-6 1z" fill="#e9edf2" /></svg>
          <svg viewBox="0 0 16 16" className="size-4"><circle cx="8" cy="8" r="7.500" fill="#f2cf25" /><path d="M1 8a7 7 0 0 1 8-7M15 9a7 7 0 0 1-8 6" stroke="#69a832" strokeWidth="1.500" fill="none" /><path d="M8 4v8M4 8h8" stroke="#2f7f22" strokeWidth="3" /></svg>
        </div>
        <span className="w-[13px] pb-2 pl-1 text-[14px] leading-3">»</span>
      </div>
      <div className="flex gap-[3px] pl-2">
        <button type="button" className={clsx(task, 'bg-[#1c47a8]')}><Icon name="logo" /><T>广联达一钢筋抽样...</T></button>
        <button type="button" className={clsx(task, 'bg-[#3c7cf0]')}>
          <svg viewBox="0 0 16 16" className="size-4"><path d="M4 1h11v14H4z" fill="#f2f5fb" stroke="#9fb5dc" /><path d="M0 3h10v9H0z" fill="#2c56a8" /><path d="M2 5l1.500 5L5 6l1.500 4L8 5" stroke="#fff" fill="none" /></svg>
          <T>在剪力墙上布置暗...</T>
        </button>
        <button type="button" className={clsx(task, 'bg-[#3c7cf0]')}>
          <svg viewBox="0 0 16 16" className="size-4"><path d="M0 1h15v14H0z" fill="#c3c765" /><path d="M3 1c1 7 5 11 12 12V9C9 8 7 5 7 1z" fill="#f1f2cf" /></svg>
          <span className="font-['Liberation_Mono',monospace] text-[10px]">Camtasia Studio</span>
        </button>
      </div>
      <svg viewBox="0 0 16 14" className="ml-auto mr-5 h-[14px] w-4" aria-hidden="true"><path d="M5 4l2-2 2 1 2-2" stroke="#000" fill="none" /><path d="M.5 5.500h15v8H.5z" fill="#fff" stroke="#111" /><path d="M2 8h12M2 11h12" stroke="#111" strokeDasharray="1 1" /></svg>
      <div className="flex h-full w-[112px] items-center border-l border-[#0d67b8] bg-linear-to-b from-[#35b4f6] via-[#1190e6] via-20% to-[#0f84da]">
        <button type="button" aria-label="显示隐藏图标" className="-ml-[10px] mr-[3px] size-[18px] shrink-0 rounded-full border border-[#9fd4f8] bg-[#2f8fe6]"><svg viewBox="0 0 16 16"><path d="M9.500 4L6 8l3.500 4" fill="none" stroke="#fff" strokeWidth="2" /></svg></button>
        <svg viewBox="0 0 16 16" className="size-4 shrink-0"><circle cx="5" cy="5" r="3.500" fill="#ddd" stroke="#222" /><path d="M5 8v7" stroke="#222" strokeWidth="2" /><path d="M8 4h7v6H8z" fill="#d4261c" /></svg>
        <svg viewBox="0 0 16 16" className="size-4 shrink-0"><path d="M0 1h16v14H0z" fill="#b06a33" /><path d="M0 8h16M5 1v7m5 7V8" stroke="#6d3a15" /><path d="M6 3h9v3H6zM0 14h16" stroke="#75b63a" strokeWidth="2" fill="none" /></svg>
        <svg viewBox="0 0 16 16" className="ml-[2px] size-4 shrink-0"><circle cx="7" cy="7" r="5.500" fill="#7b7f88" stroke="#ddd" /><circle cx="6" cy="7" r="2" fill="#33373f" /><path d="M11 14c2-1 4-3 4-6" stroke="#c8dcf8" fill="none" /></svg>
        <time className="ml-auto mr-3"><T>16:33</T></time>
      </div>
    </footer>
  );
}

export default function App() {
  return (
    <div className="relative flex h-screen flex-col overflow-hidden bg-[#f3e8e0] font-['Noto_Sans_CJK_SC',sans-serif] text-[12px] leading-4 text-[#111]">
      <TitleBar />
      <nav className="flex h-[22px] shrink-0 items-center border-b border-[#dccfca] bg-[#f8edec]">
        <Grip />
        {menus.map((m) => <button key={m} type="button" className="px-[5px]"><T ul>{m}</T></button>)}
      </nav>
      <div className="flex h-[26px] shrink-0">
        <Bar>
          <Grip />
          <Tool icon="file" title="新建" />
          <Tool icon="open" title="打开" split />
          <Tool icon="save" title="保存" />
          <Sep />
          <Tool icon="undo" title="撤销" split />
          <button type="button" aria-label="更多" className="w-4 pb-2 text-[14px] font-bold leading-3">»</button>
        </Bar>
        <Bar>
          <Grip />
          <Tool icon="define" label="定义" />
          <Tool icon="sigma" label="汇总计算" />
          <Tool icon="align" label="平齐板顶" />
          <Tool icon="find" label="查找图元" />
          <Tool icon="glasses" label="查看钢筋量" />
          <Tool icon="batch" label="批量选择" />
          <Tool icon="mesh" label="钢筋三维" off />
          <Tool icon="lock" label="锁定" />
          <button type="button" aria-label="更多" className="w-[27px] pb-2 pl-2 text-[14px] font-bold leading-3">»</button>
        </Bar>
        <Bar className="flex-1">
          <Grip />
          <Combo value="二维" label="视图维度" icon="rect" className="mx-[2px] w-[60px]" />
          <Tool icon="box3d" label="俯视" split />
          <Tool icon="orbit" label="动态观察" />
          <Tool icon="part3d" label="局部三维" />
          <Sep />
          <Tool icon="full" label="全屏" />
          <Tool icon="zoom" label="缩放" split />
          <Tool icon="pan" label="平移" split />
          <Tool icon="screen" label="屏幕旋转" menu />
          <Sep />
          <Tool icon="floors" label="选择楼层" />
          <Tool icon="wire" label="线框" />
        </Bar>
      </div>
      <div className="flex min-h-0 flex-1">
        <div className="flex pb-[2px] pt-[2px]">
          <NavPanel />
          <ListPanel />
        </div>
        <main className="ml-[3px] flex min-w-0 flex-1 flex-col">
          <div className="flex items-start pt-px">
            <Bar>
              <Grip />
              <Tool icon="brush" label="删除" />
              <Sep />
              <Tool icon="copy" label="复制" />
              <Tool icon="mirror" label="镜像" />
              <Sep />
              <Tool icon="move" label="移动" />
              <Tool icon="rotate" label="旋转" />
              <Sep />
              <Tool icon="extend" label="延伸" />
              <Tool icon="trim" label="修剪" />
              <Sep />
              <Tool icon="breakk" label="打断" />
              <Tool icon="merge" label="合并" />
              <Tool icon="split" label="分割" off />
              <Sep />
              <Tool icon="alignL" label="对齐" menu />
              <Tool icon="offset" label="偏移" />
              <Tool icon="stretch" label="拉伸" />
              <Sep />
              <Tool icon="grip" label="设置夹点" off />
            </Bar>
          </div>
          <div className="flex items-start">
            <Bar>
              <Grip />
              <div className="flex gap-1 px-[2px]">
                <Combo value="首层" label="楼层" className="w-[57px]" />
                <Combo value="墙" label="构件大类" className="w-[68px]" />
                <Combo value="暗梁" label="构件类型" className="w-[68px]" />
                <Combo value="AL-2" label="构件" className="w-[68px]" mono />
                <Combo value="分层1" label="分层" className="w-[68px]" />
              </div>
              <Sep />
              <Tool icon="prop" label="属性" />
              <Tool icon="pencil" label="编辑钢筋" pressed />
              <Tool icon="list" label="构件列表" pressed />
              <Tool icon="pick" label="拾取构件" />
            </Bar>
            <Bar>
              <Grip />
              <Tool icon="ax2" label="两点" />
              <Tool icon="axp" label="平行" />
              <Tool icon="axa" label="点角" split />
              <Tool icon="ax3" label="三点辅轴" split />
              <Tool icon="brush" label="删除辅轴" />
              <Tool icon="dim" label="尺寸标注" split />
            </Bar>
          </div>
          <div className="flex items-start">
            <Bar className="pl-[2px]">
              <Grip />
              <Tool icon="cursor" label="选择" pressed split />
              <Sep />
              <Tool icon="point" label="点" />
              <Sep />
              <Tool icon="line" label="直线" />
              <Tool icon="len" label="点加长度" />
              <Tool icon="arc" label="三点画弧" split />
              <Combo value="" label="半径" className="w-[55px]" />
              <Tool icon="rect" label="矩形" />
              <Tool icon="smart" label="智能布置" menu />
              <Sep />
              <Tool icon="modify" label="修改暗梁段属性" />
              <Tool icon="level" label="查改标高" />
            </Bar>
          </div>
          <Drawing />
          <div className="flex items-start">
            <Bar className="pl-[9px]">
              <Grip />
              <Tool icon="ortho" label="正交" />
              <Tool icon="snap" label="对象捕捉" />
              <Tool icon="dyn" label="动态输入" pressed />
            </Bar>
            <Bar className="pl-[2px]">
              <Grip />
              <Tool icon="cross" label="交点" />
              <Tool icon="perp" label="垂点" off />
              <Tool icon="mid" label="中点" off />
              <Tool icon="vertex" label="顶点" off />
              <Tool icon="coord" label="坐标" />
            </Bar>
            <Bar>
              <Grip />
              <Combo value="不偏移" label="偏移方式" className="ml-[2px] w-[60px]" />
              <Sep />
              <Spin label="X=" value="0" unit="mm" />
              <Spin label=" Y=" value="0" unit="mm" />
              <Sep />
              <label className="flex items-center gap-[7px] pl-[2px]">
                <input type="checkbox" className="size-[13px] appearance-none border border-[#35587f] bg-white" />
                旋转
              </label>
              <Spin label="" value="0.000" unit="° " wide />
            </Bar>
          </div>
          <RebarPanel />
        </main>
      </div>
      <div className="flex h-[21px] shrink-0 items-center border-t border-[#a59b93] bg-[#f1e7dd]">
        <span className="w-[148px] pl-px"><T>X=1311 Y=2921</T></span>
        <span className="w-20 border-l border-[#cfc4bf] pl-[2px]"><T>层高:3m</T></span>
        <span className="w-[100px] border-l border-[#cfc4bf] pl-[2px]"><T>底标高:-0.05m</T></span>
        <span className="w-12 border-l border-[#cfc4bf] pl-[2px]"><T>1(1)</T></span>
        <span className="border-l border-[#cfc4bf] pl-[3px]">按鼠标左键指定第一个角点，或拾取构件图元</span>
      </div>
      <Taskbar />
      <div className="absolute bottom-[31px] right-[9px] flex h-[26px] w-[174px] items-center rounded-[4px] border border-[#c5d6e6] bg-linear-to-b from-[#fafdff] to-[#c9e2f4] px-1 font-['Noto_Sans',sans-serif] shadow">
        <svg viewBox="0 0 20 20" className="size-5"><circle cx="10" cy="10" r="9" fill="#f6cf20" /><path d="M2 8a9 9 0 0 1 9-7M18 12a9 9 0 0 1-9 7" fill="none" stroke="#4c9a34" strokeWidth="2" /><path d="M10 6v8M6 10h8" stroke="#2f7f22" strokeWidth="4" /></svg>
        <svg viewBox="0 0 10 12" className="ml-[6px] h-3 w-[10px]"><path d="M5 1v9M2 6l3 4 3-4" fill="none" stroke="#2fa33a" strokeWidth="2" /></svg>
        <span className="w-[42px] text-right text-[11px]">0K/S</span>
        <svg viewBox="0 0 10 12" className="ml-[6px] h-3 w-[10px]"><path d="M5 11V2M2 6l3-4 3 4" fill="none" stroke="#f3a31f" strokeWidth="2" /></svg>
        <span className="w-[42px] text-right text-[11px]">0K/S</span>
        <button type="button" aria-label="浏览器" className="ml-auto flex size-[19px] shrink-0 items-center justify-center rounded-[3px] border border-[#a9c6de]">
          <svg viewBox="0 0 16 16" className="size-4"><path d="M12.500 10.500A5 5 0 1 1 13 7.500H5" fill="none" stroke="#4a97dc" strokeWidth="2.300" /><path d="M2 13C0 16 9 11 14 3c0-2-3-1-4 0" fill="none" stroke="#7cb6ea" /></svg>
        </button>
      </div>
    </div>
  );
}
